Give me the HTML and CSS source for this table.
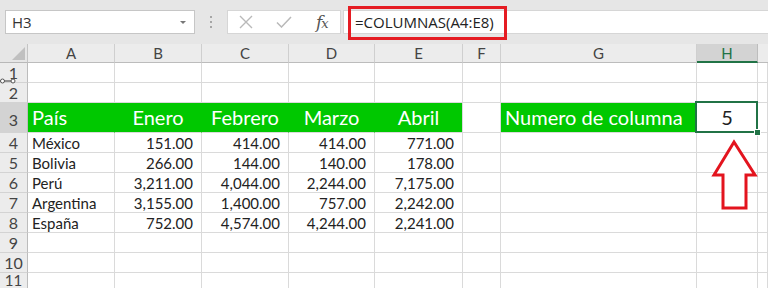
FILE: index.html
```html
<!DOCTYPE html>
<html lang="es">
<head>
<meta charset="utf-8">
<title>COLUMNAS</title>
<link rel="stylesheet" href="styles.css">
</head>
<body>
<div class="toolbar">
  <div class="namebox"><span>H3</span><span class="caret"></span></div>
  <div class="grip"><i></i><i></i><i></i></div>
  <div class="fxbox">
    <svg class="ico-x" width="14" height="14" viewBox="0 0 14 14"><path d="M1 1L13 13M13 1L1 13" stroke="#b9b9b9" stroke-width="1.4" fill="none"/></svg>
    <svg class="ico-ok" width="16" height="12" viewBox="0 0 16 12"><path d="M1 6.5L5.5 11L15 1" stroke="#b9b9b9" stroke-width="1.5" fill="none"/></svg>
    <span class="fx">f<i>x</i></span>
  </div>
  <div class="formula">=COLUMNAS(A4:E8)<span class="mark"></span></div>
</div>
<div class="sheet">
  <div class="corner"><span class="tri"></span></div>
  <div class="ch">A</div><div class="ch">B</div><div class="ch">C</div><div class="ch">D</div><div class="ch">E</div><div class="ch">F</div><div class="ch">G</div><div class="ch chsel">H</div><div class="ch last"></div>

  <div class="rh">1</div><div class="c"></div><div class="c"></div><div class="c"></div><div class="c"></div><div class="c"></div><div class="c"></div><div class="c"></div><div class="c"></div><div class="c"></div>
  <div class="rh">2</div><div class="c"></div><div class="c"></div><div class="c"></div><div class="c"></div><div class="c"></div><div class="c"></div><div class="c"></div><div class="c"></div><div class="c"></div>
  <div class="rh rhsel">3</div><div class="c g">País</div><div class="c g ctr">Enero</div><div class="c g ctr">Febrero</div><div class="c g ctr">Marzo</div><div class="c g ctr gend">Abril</div><div class="c"></div><div class="c g gend">Numero de columna</div><div class="c big sel">5</div><div class="c"></div>
  <div class="rh">4</div><div class="c">México</div><div class="c n">151.00</div><div class="c n">414.00</div><div class="c n">414.00</div><div class="c n">771.00</div><div class="c"></div><div class="c"></div><div class="c"></div><div class="c"></div>
  <div class="rh">5</div><div class="c">Bolivia</div><div class="c n">266.00</div><div class="c n">144.00</div><div class="c n">140.00</div><div class="c n">178.00</div><div class="c"></div><div class="c"></div><div class="c"></div><div class="c"></div>
  <div class="rh">6</div><div class="c">Perú</div><div class="c n">3,211.00</div><div class="c n">4,044.00</div><div class="c n">2,244.00</div><div class="c n">7,175.00</div><div class="c"></div><div class="c"></div><div class="c"></div><div class="c"></div>
  <div class="rh">7</div><div class="c">Argentina</div><div class="c n">3,155.00</div><div class="c n">1,400.00</div><div class="c n">757.00</div><div class="c n">2,242.00</div><div class="c"></div><div class="c"></div><div class="c"></div><div class="c"></div>
  <div class="rh">8</div><div class="c">España</div><div class="c n">752.00</div><div class="c n">4,574.00</div><div class="c n">4,244.00</div><div class="c n">2,241.00</div><div class="c"></div><div class="c"></div><div class="c"></div><div class="c"></div>
  <div class="rh">9</div><div class="c"></div><div class="c"></div><div class="c"></div><div class="c"></div><div class="c"></div><div class="c"></div><div class="c"></div><div class="c"></div><div class="c"></div>
  <div class="rh">10</div><div class="c"></div><div class="c"></div><div class="c"></div><div class="c"></div><div class="c"></div><div class="c"></div><div class="c"></div><div class="c"></div><div class="c"></div>
  <div class="rh cut">11</div><div class="c cut"></div><div class="c cut"></div><div class="c cut"></div><div class="c cut"></div><div class="c cut"></div><div class="c cut"></div><div class="c cut"></div><div class="c cut"></div><div class="c cut"></div>
</div>
<svg class="cursor" width="18" height="8" viewBox="0 0 18 8"><path d="M0 4H14" stroke="#555" stroke-width="1.2"/><circle cx="2.5" cy="4" r="2" fill="#fff" stroke="#555" stroke-width="1"/><circle cx="13" cy="4" r="2" fill="#fff" stroke="#555" stroke-width="1"/></svg>
<svg class="arrow" width="52" height="74" viewBox="0 0 52 74"><path d="M24 4L45 37H36V70H13V37H4Z" fill="#fff" stroke="#e3141e" stroke-width="3" stroke-linejoin="miter"/></svg>
</body>
</html>
```
FILE: styles.css
```css
html, body {
  margin: 0;
  padding: 0;
}
body {
  width: 768px;
  height: 307px;
  overflow: hidden;
  position: relative;
  background: #ffffff;
  font-family: Lato, "Liberation Sans", sans-serif;
}
.toolbar {
  height: 44px;
  background: #e6e6e6;
  display: flex;
  align-items: center;
}
.namebox {
  margin-left: 5px;
  width: 190px;
  height: 24px;
  box-sizing: border-box;
  border: 1px solid #c6c6c6;
  background: #fff;
  display: flex;
  align-items: center;
  justify-content: space-between;
  padding: 0 8px 0 6px;
  font: 15px "Open Sans", sans-serif;
  color: #333;
}
.caret {
  width: 0;
  height: 0;
  border-left: 3px solid transparent;
  border-right: 3px solid transparent;
  border-top: 3px solid #777;
}
.grip {
  margin-left: 15px;
  width: 2px;
  display: flex;
  flex-direction: column;
  gap: 3px;
}
.grip i {
  display: block;
  width: 2px;
  height: 2px;
  background: #a6a6a6;
}
.fxbox {
  margin-left: 15px;
  width: 114px;
  height: 24px;
  box-sizing: border-box;
  border: 1px solid #d6d6d6;
  background: #fff;
  display: flex;
  align-items: center;
}
.ico-x { margin-left: 11px; }
.ico-ok { margin-left: 23px; }
.fx {
  margin-left: 24px;
  font: italic 17px "DejaVu Serif", "Liberation Serif", serif;
  color: #555;
  letter-spacing: -1px;
  line-height: 1;
}
.fx i {
  font-size: 13px;
}
.formula {
  margin-left: 2px;
  flex: 1;
  height: 24px;
  box-sizing: border-box;
  border: 1px solid #d6d6d6;
  border-right: none;
  background: #fff;
  position: relative;
  padding-left: 11px;
  display: flex;
  align-items: center;
  font: 15px "Open Sans", sans-serif;
  color: #222;
}
.mark {
  position: absolute;
  left: 4px;
  top: -5px;
  width: 159px;
  height: 34px;
  box-sizing: border-box;
  border: 3px solid #e51c23;
}
.sheet {
  display: grid;
  grid-template-columns: 28px 87px 87px 87px 86px 88px 38px 196px 61px 1fr;
  grid-template-rows: 19px 20px 20px 30px repeat(7, 20px) 15px;
}
.corner {
  background: #e6e6e6;
  border-right: 1px solid #c4c4c4;
  border-bottom: 1px solid #b8b8b8;
  position: relative;
}
.tri {
  position: absolute;
  right: 2px;
  bottom: 2px;
  width: 0;
  height: 0;
  border-left: 13px solid transparent;
  border-bottom: 13px solid #c0c0c0;
}
.ch {
  background: #ececec;
  border-right: 1px solid #cfcfcf;
  border-bottom: 1px solid #bcbcbc;
  display: flex;
  align-items: center;
  justify-content: center;
  font-size: 15px;
  color: #444;
}
.ch.last { border-right: none; }
.chsel {
  background: #d3d3d3;
  color: #217346;
  border-bottom: 2px solid #217346;
  border-right-color: #bdbdbd;
}
.rh {
  background: #ececec;
  border-right: 1px solid #bcbcbc;
  border-bottom: 1px solid #d3d3d3;
  display: flex;
  align-items: center;
  justify-content: center;
  font-size: 16px;
  color: #444;
}
.rhsel {
  background: #d3d3d3;
  align-items: flex-end;
  padding-bottom: 3px;
}
.c {
  border-right: 1px solid #dadada;
  border-bottom: 1px solid #dadada;
  display: flex;
  align-items: center;
  padding: 0 4px;
  white-space: nowrap;
  font-size: 15px;
  color: #222;
  min-width: 0;
}
.c.n {
  justify-content: flex-end;
  padding-right: 8px;
}
.c.g {
  background: #00c800;
  border-right-color: #00c800;
  color: #fff;
  font-size: 20px;
  align-items: flex-end;
  padding-bottom: 3px;
}
.c.g.ctr { justify-content: center; padding: 0 0 3px; }
.c.g.gend { border-right-color: #dadada; }
.c.big {
  font-size: 20px;
  justify-content: center;
  align-items: flex-end;
  padding-bottom: 3px;
}
.sel { position: relative; }
.sel::before {
  content: "";
  position: absolute;
  left: -2px;
  top: -2px;
  right: -1px;
  bottom: -1px;
  border: 2px solid #217346;
}
.sel::after {
  content: "";
  position: absolute;
  right: -4px;
  bottom: -4px;
  width: 5px;
  height: 5px;
  background: #217346;
  border: 1px solid #fff;
}
.cut {
  border-bottom: none;
  align-items: flex-start;
}
.rh.cut {
  line-height: 13px;
  font-size: 15px;
  padding-top: 1px;
}
.cursor {
  position: absolute;
  left: 0;
  top: 77px;
}
.arrow {
  position: absolute;
  left: 710px;
  top: 138px;
}
```
